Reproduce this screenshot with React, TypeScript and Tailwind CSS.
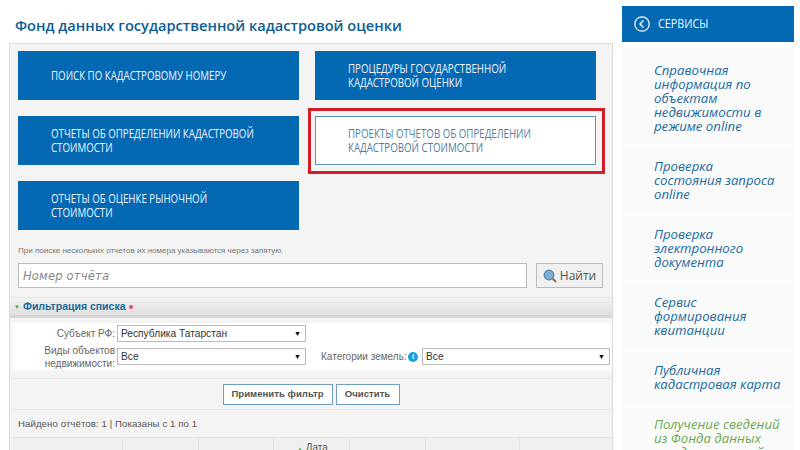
import React from "react";

const tile = "h-[49px] bg-[#0568b3] text-[#eef5fa] flex items-center pl-[33px] text-[12px] leading-[14px]";
const squeezed = "inline-block whitespace-nowrap origin-left scale-x-[0.81]";
const select = "h-[17px] border border-[#bbb] bg-white flex items-center justify-between pl-[3px] pr-[4px] text-[10.2px] text-[#333] font-['Liberation_Sans',sans-serif]";
const action = "h-[21px] bg-white border border-[#6f9fc0] flex items-center justify-center text-[9.6px] font-bold whitespace-nowrap text-[#555] font-['Liberation_Sans',sans-serif]";
const services: [string, string, string][] = [
  ["Справочная информация по объектам недвижимости в режиме online", "h-[100px] pt-[15px]", "text-[#1b6a9c]"],
  ["Проверка состояния запроса online", "h-[68px] pt-[11px]", "text-[#1b6a9c]"],
  ["Проверка электронного документа", "h-[68px] pt-[11px]", "text-[#1b6a9c]"],
  ["Сервис формирования квитанции", "h-[68px] pt-[11px]", "text-[#1b6a9c]"],
  ["Публичная кадастровая карта", "h-[54px] pt-[11px]", "text-[#1b6a9c]"],
  ["Получение сведений из Фонда данных государственной", "h-[70px] pt-[11px]", "text-[#6aa84f]"],
];

function Arrow() {
  return <span className="text-[7px] leading-none text-black">▼</span>;
}

export default function App() {
  return (
    <div className="w-[800px] h-[450px] overflow-hidden bg-white flex font-['Open_Sans',sans-serif]">
      <div className="w-[622px] shrink-0 pl-[9px] pr-[9px]">
        <h1 className="h-[43px] pt-[13px] pl-[6px] text-[14.6px] leading-[24px] font-semibold text-[#0d5c94]">
          Фонд данных государственной кадастровой оценки
        </h1>
        <div className="relative h-[420px] bg-[#f4f4f4] border border-[#dcdcdc]">
          <div className="grid grid-cols-[281px_281px] gap-x-[16px] gap-y-[16px] pt-[7px] pl-[8px]">
            <div className={tile}><span className={squeezed}>ПОИСК ПО КАДАСТРОВОМУ НОМЕРУ</span></div>
            <div className={tile}><span className={squeezed}>ПРОЦЕДУРЫ ГОСУДАРСТВЕННОЙ<br />КАДАСТРОВОЙ ОЦЕНКИ</span></div>
            <div className={tile}><span className={squeezed}>ОТЧЕТЫ ОБ ОПРЕДЕЛЕНИИ КАДАСТРОВОЙ<br />СТОИМОСТИ</span></div>
            <div className="h-[49px] bg-white border border-[#5b93bd] text-[#4d7ea6] flex items-center pl-[32px] text-[12px] leading-[14px]">
              <span className={squeezed}>ПРОЕКТЫ ОТЧЕТОВ ОБ ОПРЕДЕЛЕНИИ<br />КАДАСТРОВОЙ СТОИМОСТИ</span>
            </div>
            <div className={tile}><span className={squeezed}>ОТЧЕТЫ ОБ ОЦЕНКЕ РЫНОЧНОЙ<br />СТОИМОСТИ</span></div>
          </div>
          <div className="absolute left-[298px] top-[64px] w-[297px] h-[66px] border-[3px] border-[#d01f27]" />

          <p className="mt-[15px] pl-[8px] text-[8px] leading-[12px] text-[#777] font-['Liberation_Sans',sans-serif]">
            При поиске нескольких отчетов их номера указываются через запятую.
          </p>
          <div className="mt-[6px] pl-[8px] flex gap-[9px]">
            <div className="w-[509px] h-[25px] bg-white border border-[#bbb] flex items-center pl-[4px] pt-[2px] text-[11.5px] italic text-[#888] font-['DejaVu_Sans',sans-serif] tracking-[0.2px]">
              Номер отчёта
            </div>
            <div className="w-[67px] h-[25px] border border-[#bbb] bg-[#f0f0f0] flex items-center justify-center gap-[3px] text-[12px] font-medium text-[#555]">
              <svg width="14" height="14" viewBox="0 0 14 14">
                <circle cx="6" cy="6" r="4.8" fill="#7fb0d6" stroke="#4f86ad" strokeWidth="1.2" />
                <path d="M9.5 9.5 L13 13" stroke="#a5682a" strokeWidth="2" />
              </svg>
              Найти
            </div>
          </div>

          <div className="mt-[9px] h-[21px] border-t border-[#e4e4e4] border-b-[3px] border-b-[#d6d6d6] bg-gradient-to-b from-[#f2f2f2] to-[#dfdfdf] flex items-center pl-[4px] gap-[3px] w-full">
            <span className="text-[6px] text-[#5aa02c] leading-none">▼</span>
            <span className="text-[10.5px] font-bold text-[#1b6a9c] font-['Liberation_Sans',sans-serif]">Фильтрация списка</span>
            <span className="w-[4px] h-[4px] rounded-full bg-[#e0506a]" />
          </div>

          <div className="mt-[5px] ml-[2px] h-[47px] bg-white flex flex-col gap-[6px] pt-[2px] font-['Liberation_Sans',sans-serif] text-[10px] text-[#666]">
            <div className="flex items-center h-[17px]">
              <div className="w-[104px] text-right pr-[1px]">Субъект РФ:</div>
              <div className={`${select} w-[189px] ml-[1px]`}>Республика Татарстан<Arrow /></div>
            </div>
            <div className="flex items-center h-[17px]">
              <div className="w-[104px] text-right pr-[1px] leading-[13px]">Виды объектов<br />недвижимости:</div>
              <div className={`${select} w-[189px] ml-[1px]`}>Все<Arrow /></div>
              <div className="ml-[15px] w-[84px] whitespace-nowrap">Категории земель:</div>
              <span className="ml-[3px] w-[10px] h-[10px] rounded-full bg-[#1aa0dc] text-white text-[8px] leading-[10px] text-center font-bold">i</span>
              <div className={`${select} w-[188px] ml-[4px]`}>Все<Arrow /></div>
            </div>
          </div>

          <div className="mt-[8px] h-[32px] border-t border-b border-[#e6e6e6] flex items-center justify-center gap-[3px]">
            <div className={`${action} w-[110px]`}>Применить фильтр</div>
            <div className={`${action} w-[64px]`}>Очистить</div>
          </div>

          <p className="pl-[8px] mt-[7px] text-[9.6px] leading-[14px] text-[#555] font-['Liberation_Sans',sans-serif] tracking-[0.1px]">Найдено отчётов: 1 | Показаны с 1 по 1</p>

          <div className="mt-[6px] ml-[2px] h-[20px] bg-[#f0f0f0] border-t border-[#e2e2e2] grid grid-cols-[111px_76px_75px_76px_76px_94px_93px] text-[10px] text-[#555] font-['Liberation_Sans',sans-serif]">
            <div className="border-r border-[#e4e4e4]" />
            <div className="border-r border-[#e4e4e4]" />
            <div className="border-r border-[#e4e4e4]" />
            <div className="border-r border-[#e4e4e4] pl-[23px] pt-[3px] leading-[14px]"><span className="text-[#5aa02c] text-[6px]">▲</span> Дата</div>
            <div className="border-r border-[#e4e4e4]" />
            <div className="border-r border-[#e4e4e4]" />
            <div />
          </div>
        </div>
      </div>

      <div className="w-[172px] shrink-0 pt-[6px]">
        <div className="h-[36px] bg-[#0568b3] flex items-center pl-[12px] gap-[8px] text-[#eef5fa] text-[12px]">
          <svg width="16" height="16" viewBox="0 0 16 16" fill="none" stroke="white">
            <circle cx="8" cy="8" r="7.2" strokeWidth="1.2" />
            <path d="M9.5 4.5 L6 8 L9.5 11.5" strokeWidth="1.4" />
          </svg>
          <span className="inline-block whitespace-nowrap origin-left scale-x-[0.9]">СЕРВИСЫ</span>
        </div>
        <div className="mt-[6px]">
          {services.map(([label, box, color]) => (
            <div key={label} className={`${box} ${color} bg-[#fafafa] border-b-2 border-white pl-[32px] pr-[12px] text-[13.2px] leading-[14px] italic`}>
              {label}
            </div>
          ))}
        </div>
      </div>
    </div>
  );
}
